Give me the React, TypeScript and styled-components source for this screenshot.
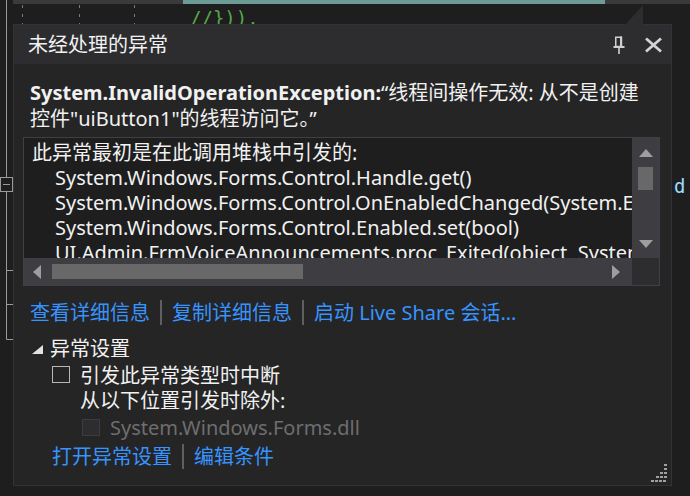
import React from 'react';
import styled, { createGlobalStyle } from 'styled-components';

const GlobalStyle = createGlobalStyle`
  html, body {
    margin: 0;
    padding: 0;
    background: #1e1e1e;
  }
  body {
    font-family: "Noto Sans", "Noto Sans CJK SC", sans-serif;
  }
`;

const stack = [
  'System.Windows.Forms.Control.Handle.get()',
  'System.Windows.Forms.Control.OnEnabledChanged(System.EventArgs)',
  'System.Windows.Forms.Control.Enabled.set(bool)',
  'UI.Admin.FrmVoiceAnnouncements.proc_Exited(object, System.EventArgs)',
];

const Gutter = () => (
  <GutterSvg width="13" height="496" viewBox="0 0 13 496">
    <g stroke="#9a9a9a" strokeWidth="1" fill="none">
      <path d="M6.5 0V177M6.5 192V339.5H13M6.5 270.5H13M6.5 304.5H13" />
      <rect x="0.5" y="177.5" width="12" height="14" fill="#1e1e1e" />
      <path d="M3 184.5H10" />
    </g>
  </GutterSvg>
);

const PinIcon = () => (
  <svg width="12" height="18" viewBox="0 0 12 18">
    <path d="M2.75 1.25H8.25V10.5H2.75Z" stroke="#d0d0d0" strokeWidth="1.5" fill="none" />
    <rect x="7" y="0.5" width="2.2" height="10.5" fill="#d0d0d0" />
    <rect x="0.5" y="10" width="11" height="2" fill="#d0d0d0" />
    <rect x="5.2" y="12" width="1.6" height="6" fill="#d0d0d0" />
  </svg>
);

const CloseIcon = () => (
  <svg width="19" height="16" viewBox="0 0 19 16">
    <path d="M2 1.5L17 14.5M17 1.5L2 14.5" stroke="#d4d4d4" strokeWidth="2.8" />
  </svg>
);

const Caret = () => (
  <svg width="11" height="9" viewBox="0 0 11 9">
    <polygon points="0,9 11,9 11,0" fill="#e2e2e2" />
  </svg>
);

const Grip = () => (
  <GripSvg width="18" height="19" viewBox="0 0 18 19">
    <g fill="#a0a0a0">
      <rect x="14" y="1" width="3" height="2" />
      <rect x="14" y="5" width="3" height="2" />
      <rect x="10" y="9" width="3" height="2" />
      <rect x="14" y="9" width="3" height="2" />
      <rect x="6" y="13" width="3" height="2" />
      <rect x="10" y="13" width="3" height="2" />
      <rect x="14" y="13" width="3" height="2" />
      <rect x="1" y="17" width="3" height="2" />
      <rect x="5" y="17" width="3" height="2" />
      <rect x="9" y="17" width="3" height="2" />
      <rect x="13" y="17" width="3" height="2" />
    </g>
  </GripSvg>
);

export default function App() {
  return (
    <>
      <GlobalStyle />
      <Screen>
        <Gutter />
        <Main>
          <ScrollStrip>
            <StripThumb />
          </ScrollStrip>
          <CodeLine>
            <Guide $gap={9} />
            <Guide $gap={56} />
            <Guide $gap={54} />
            <Comment>{'//})).'}</Comment>
          </CodeLine>
          <Workspace>
            <Popup>
              <Beak />
              <TitleBar>
                <Title>未经处理的异常</Title>
                <PinIcon />
                <CloseIcon />
              </TitleBar>
              <Body>
                <Message>
                  <b>System.InvalidOperationException:</b>“线程间操作无效: 从不是创建
                  <br />
                  控件"uiButton1"的线程访问它。”
                </Message>
                <TraceBox>
                  <TraceText>
                    <TraceLine>此异常最初是在此调用堆栈中引发的:</TraceLine>
                    {stack.map((line) => (
                      <TraceLine key={line} $indent>
                        {line}
                      </TraceLine>
                    ))}
                  </TraceText>
                  <VScroll>
                    <Arrow $dir="up" />
                    <VThumb />
                    <Spacer />
                    <Arrow $dir="down" />
                  </VScroll>
                  <HScroll>
                    <Arrow $dir="left" />
                    <HThumb />
                    <Spacer />
                    <Arrow $dir="right" />
                  </HScroll>
                  <Corner />
                </TraceBox>
                <LinkRow $pad={7}>
                  <Link>查看详细信息</Link>
                  <Divider />
                  <Link>复制详细信息</Link>
                  <Divider />
                  <Link>启动 Live Share 会话...</Link>
                </LinkRow>
                <Settings>
                  <SectionHead>
                    <Caret />
                    <span>异常设置</span>
                  </SectionHead>
                  <Indented>
                    <CheckRow>
                      <CheckBox />
                      <span>引发此异常类型时中断</span>
                    </CheckRow>
                    <SubLine>从以下位置引发时除外:</SubLine>
                    <CheckRow $pad={30} $muted>
                      <CheckBox $disabled />
                      <span>System.Windows.Forms.dll</span>
                    </CheckRow>
                    <LinkRow $pad={0} $gapTop={2}>
                      <Link>打开异常设置</Link>
                      <Divider />
                      <Link>编辑条件</Link>
                    </LinkRow>
                  </Indented>
                </Settings>
              </Body>
              <Grip />
            </Popup>
            <EdgeStrip>
              <EdgeCode>d</EdgeCode>
            </EdgeStrip>
          </Workspace>
        </Main>
      </Screen>
    </>
  );
}

const Screen = styled.div`
  width: 690px;
  height: 496px;
  display: flex;
  overflow: hidden;
  background: #1e1e1e;
  color: #f1f1f1;
  font-family: "Noto Sans", "Noto Sans CJK SC", sans-serif;
  font-size: 20px;
`;

const GutterSvg = styled.svg`
  flex: none;
  display: block;
`;

const Main = styled.div`
  flex: 1;
  min-width: 0;
  display: flex;
  flex-direction: column;
`;

const ScrollStrip = styled.div`
  height: 4px;
  flex: none;
  display: flex;
  background: #3a3a3d;
`;

const StripThumb = styled.div`
  margin-left: 170px;
  width: 422px;
  background: #6d9c97;
`;

const CodeLine = styled.div`
  height: 20px;
  flex: none;
  display: flex;
  overflow: hidden;
`;

const Guide = styled.div<{ $gap: number }>`
  width: 1px;
  flex: none;
  margin-left: ${(p) => p.$gap}px;
  background: repeating-linear-gradient(
    to bottom,
    transparent 0 1px,
    #7a7a7a 1px 4px,
    transparent 4px 9px
  );
`;

const Comment = styled.span`
  margin-left: 55px;
  padding-top: 3px;
  font-family: "DejaVu Sans Mono", monospace;
  font-size: 19px;
  line-height: 22px;
  color: #57a64a;
  white-space: pre;
`;

const Workspace = styled.div`
  height: 462px;
  flex: none;
  display: flex;
`;

const Popup = styled.section`
  position: relative;
  width: 659px;
  flex: none;
  box-sizing: border-box;
  border: 1px solid #333337;
  background: #252526;
  display: flex;
  flex-direction: column;
`;

const Beak = styled.div`
  position: absolute;
  top: -20px;
  right: 28px;
  width: 18px;
  height: 20px;
  background: #2d2d30;
  clip-path: polygon(100% 0, 100% 100%, 0 100%);
`;

const TitleBar = styled.header`
  height: 39px;
  flex: none;
  display: flex;
  align-items: center;
  gap: 19px;
  padding: 0 8px 0 14px;
  background: #2d2d30;
`;

const Title = styled.div`
  flex: 1;
  line-height: 26px;
`;

const Body = styled.div`
  display: flex;
  flex-direction: column;
  padding: 16px 11px 0 9px;
`;

const Message = styled.div`
  padding-left: 7px;
  line-height: 26px;
  b {
    font-weight: 700;
  }
`;

const TraceBox = styled.div`
  margin-top: 5px;
  border: 1px solid #3f3f46;
  background: #1e1e1e;
  display: grid;
  grid-template-columns: 1fr 27px;
  grid-template-rows: 120px 27px;
`;

const TraceText = styled.div`
  overflow: hidden;
  padding: 2px 0 0 8px;
  line-height: 25px;
  white-space: nowrap;
`;

const TraceLine = styled.div<{ $indent?: boolean }>`
  padding-left: ${(p) => (p.$indent ? 23 : 0)}px;
`;

const VScroll = styled.div`
  display: flex;
  flex-direction: column;
  align-items: center;
  padding: 11px 0 10px;
  background: #3e3e42;
`;

const HScroll = styled.div`
  display: flex;
  align-items: center;
  padding: 0 12px 0 9px;
  background: #3e3e42;
`;

const Corner = styled.div`
  background: #2d2d30;
`;

const Spacer = styled.div`
  flex: 1;
`;

const VThumb = styled.div`
  margin-top: 10px;
  width: 15px;
  height: 23px;
  background: #686868;
`;

const HThumb = styled.div`
  margin-left: 11px;
  width: 251px;
  height: 15px;
  background: #686868;
`;

const Arrow = styled.div<{ $dir: 'up' | 'down' | 'left' | 'right' }>`
  width: 0;
  height: 0;
  flex: none;
  border-style: solid;
  border-color: transparent;
  ${(p) =>
    p.$dir === 'up'
      ? 'border-width: 0 7px 8px; border-bottom-color: #9e9e9e;'
      : p.$dir === 'down'
      ? 'border-width: 8px 7px 0; border-top-color: #9e9e9e;'
      : p.$dir === 'left'
      ? 'border-width: 7px 8px 7px 0; border-right-color: #9e9e9e;'
      : 'border-width: 7px 0 7px 8px; border-left-color: #9e9e9e;'}
`;

const LinkRow = styled.div<{ $pad: number; $gapTop?: number }>`
  display: flex;
  align-items: center;
  height: 27px;
  margin-top: ${(p) => p.$gapTop ?? 13}px;
  padding-left: ${(p) => p.$pad}px;
`;

const Link = styled.a`
  color: #3794ff;
  cursor: pointer;
  line-height: 26px;
  white-space: nowrap;
`;

const Divider = styled.span`
  width: 2px;
  height: 25px;
  margin: 0 10px;
  background: #5f5f62;
`;

const Settings = styled.div`
  margin-top: 8px;
  padding-left: 9px;
`;

const SectionHead = styled.div`
  display: flex;
  align-items: center;
  gap: 7px;
  height: 27px;
  svg {
    margin-top: 4px;
  }
`;

const Indented = styled.div`
  padding-left: 20px;
`;

const CheckRow = styled.div<{ $pad?: number; $muted?: boolean }>`
  display: flex;
  align-items: center;
  gap: 10px;
  height: 27px;
  padding-left: ${(p) => p.$pad ?? 0}px;
  color: ${(p) => (p.$muted ? '#6e6e6e' : '#f1f1f1')};
`;

const CheckBox = styled.span<{ $disabled?: boolean }>`
  width: 18px;
  height: 17px;
  box-sizing: border-box;
  flex: none;
  border: 1px solid ${(p) => (p.$disabled ? '#3c3c40' : '#b8b8b8')};
  background: ${(p) => (p.$disabled ? '#2d2d30' : 'transparent')};
`;

const SubLine = styled.div`
  height: 26px;
  line-height: 26px;
  padding-left: 28px;
`;

const GripSvg = styled.svg`
  position: absolute;
  right: 3px;
  bottom: 3px;
`;

const EdgeStrip = styled.div`
  flex: 1;
  overflow: hidden;
  padding-top: 151px;
`;

const EdgeCode = styled.div`
  padding-left: 2px;
  font-family: "DejaVu Sans Mono", monospace;
  font-size: 19px;
  line-height: 22px;
  color: #9cdcfe;
  white-space: pre;
`;
